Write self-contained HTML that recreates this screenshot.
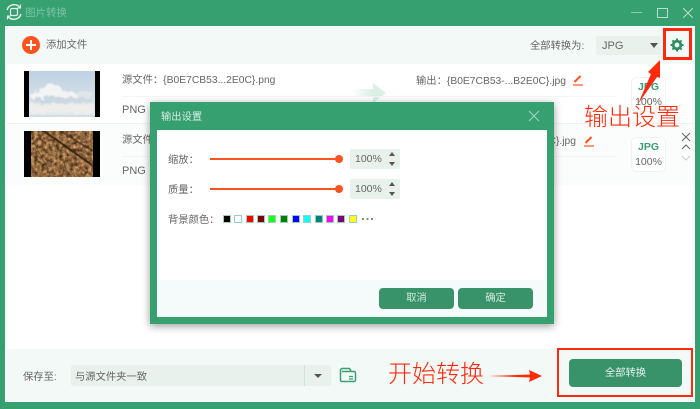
<!DOCTYPE html>
<html lang="zh"><head><meta charset="utf-8"><style>
*{box-sizing:border-box;margin:0;padding:0}
html,body{width:700px;height:409px;overflow:hidden;background:#36a071}
body{position:relative;font-family:"Liberation Sans","Noto Sans CJK SC",sans-serif;font-size:10.3px;color:#666;filter:blur(.25px)}
.a{position:absolute;white-space:nowrap;line-height:14px;margin-top:1px}
.b{position:absolute}
.red{color:#ff2a0c;font-size:24px;line-height:30px;font-weight:300;position:absolute;white-space:nowrap}
.fmt{position:absolute;width:35px;height:35px;background:#fff;border:1px solid #eef3f1;border-radius:5px;text-align:center;line-height:15px;font-size:10.5px;color:#666;padding-top:2px}
.fmt b{display:block;color:#36a071;font-size:10.5px}
.sw{position:absolute;top:215px;width:8px;height:8px;border:1px solid #9ccdb6}
.spin{position:absolute;left:350px;width:50px;height:20px;background:#e9f1ed;border-radius:2px;font-size:10.5px;line-height:21px;padding-left:5px}
.btn{position:absolute;top:288px;width:75px;height:21px;background:#39936a;border-radius:4px;color:#d4eadf;text-align:center;line-height:22px;font-size:10.3px}
</style></head><body>

<!-- title bar -->
<svg class="b" style="left:5px;top:3px" width="18" height="18" viewBox="0 0 18 18" fill="none" stroke="#e6f4ee" stroke-width="1.400"><path d="M2 7a7.500 7.500 0 0 1 13-2.500"/><path d="M16 11a7.500 7.500 0 0 1-13 2.500"/><path d="M15.500 1.500v3.500H12M2.500 16.500V13H6" stroke-width="1.100"/><rect x="5.500" y="5.500" width="7" height="7" rx="1.500" stroke-width="1.200"/></svg>
<div class="a" style="left:25px;top:5px;font-size:10.500px;color:#7cc5a3">图片转换</div>
<div class="b" style="left:631px;top:12px;width:11px;height:1px;background:#8ccbae"></div>
<div class="b" style="left:657px;top:8px;width:11px;height:10px;border:1px solid #b5dfcb"></div>
<svg class="b" style="left:683px;top:8px" width="10" height="10" stroke="#b5dfcb" stroke-width="1"><path d="M0 0l10 10M10 0L0 10"/></svg>

<!-- main window -->
<div class="b" style="left:5px;top:26px;width:690px;height:376px;background:#fff"></div>
<div class="b" style="left:6px;top:27px;width:689px;height:37px;background:#f3f9f7"></div>
<div class="b" style="left:22px;top:36px;width:18px;height:18px;border-radius:50%;background:#fb5420"></div>
<div class="b" style="left:26px;top:44px;width:10px;height:2px;background:#fff"></div>
<div class="b" style="left:30px;top:40px;width:2px;height:10px;background:#fff"></div>
<div class="a" style="left:46px;top:38px">添加文件</div>
<div class="a" style="left:530px;top:39px">全部转换为:</div>
<div class="b" style="left:596px;top:36px;width:65px;height:19px;background:#e9f1ed;border-radius:2px"></div>
<div class="a" style="left:602px;top:38px;font-size:11px">JPG</div>
<div class="b" style="left:650px;top:43px;border-left:4px solid transparent;border-right:4px solid transparent;border-top:5px solid #555"></div>
<svg class="b" style="left:670px;top:38px" width="14" height="14" viewBox="0 0 14 14"><circle cx="7" cy="7" r="3.800" fill="none" stroke="#2f8f63" stroke-width="2.800"/><g stroke="#2f8f63" stroke-width="2"><path d="M7 .5v2.500M7 11V13.500M.5 7H3M11 7h2.500M2.400 2.400l1.800 1.800M9.800 9.800l1.800 1.800M2.400 11.600l1.800-1.800M9.800 4.200l1.800-1.800"/></g></svg>

<svg width="0" height="0" style="position:absolute"><defs>
<linearGradient id="s" x1="0" y1="0" x2="0" y2="1"><stop offset="0" stop-color="#bfd0e0"/><stop offset=".55" stop-color="#d3dfe9"/><stop offset="1" stop-color="#e4e9ec"/></linearGradient>
<filter id="bl" x="-20%" y="-20%" width="140%" height="140%"><feTurbulence type="fractalNoise" baseFrequency=".18" numOctaves="2" seed="3" result="n"/><feDisplacementMap in="SourceGraphic" in2="n" scale="7"/><feGaussianBlur stdDeviation=".6"/></filter>
<filter id="st" x="0" y="0" width="100%" height="100%" color-interpolation-filters="sRGB"><feTurbulence type="fractalNoise" baseFrequency=".28" numOctaves="3" seed="4"/><feColorMatrix values="1 0 0 0 .06  .75 0 0 0 .03  .5 0 0 0 0  0 0 0 0 1"/></filter>
</defs></svg>

<!-- row 1 -->
<svg class="b" style="left:24px;top:71px" width="76" height="46" viewBox="0 0 76 46"><rect width="76" height="46" fill="#000"/><rect x="5" width="66" height="46" fill="url(#s)"/><g filter="url(#bl)"><g fill="#f1f3f4"><ellipse cx="27" cy="20" rx="11" ry="7"/><ellipse cx="16" cy="25" rx="10" ry="4"/><ellipse cx="42" cy="25" rx="12" ry="5"/><ellipse cx="60" cy="24" rx="8" ry="4" fill="#dfe6eb"/></g><ellipse cx="30" cy="29" rx="22" ry="3" fill="#cbd7e1"/><ellipse cx="56" cy="29" rx="13" ry="2.500" fill="#cdd8e1"/><rect x="5" y="33" width="66" height="9" fill="#eeefec"/></g><rect x="5" y="44" width="66" height="2" fill="#d2dde6"/><rect x="0" width="5" height="46" fill="#000"/><rect x="71" width="5" height="46" fill="#000"/></svg>
<div class="a" style="left:122px;top:73px">源文件：{B0E7CB53...2E0C}.png</div>
<div class="a" style="left:122px;top:102px;font-size:11px">PNG</div>
<div class="a" style="left:416px;top:74px">输出：{B0E7CB53-...B2E0C}.jpg</div>
<svg class="b" style="left:573px;top:74px" width="10" height="12"><path d="M1.500 8L7.500 2" stroke="#fb5420" stroke-width="2"/><path d="M0 11h10" stroke="#fb5420" stroke-width="1.200"/></svg>
<div class="b" style="left:352px;top:89px;width:21px;height:7px;background:linear-gradient(90deg,#fff,#dcefe5)"></div>
<div class="b" style="left:373px;top:83px;border-left:13px solid #dcefe5;border-top:10px solid transparent;border-bottom:10px solid transparent"></div>
<div class="b" style="left:122px;top:96px;width:494px;height:1px;background:#f3f6f5"></div>
<div class="fmt" style="left:631px;top:77px"><b>JPG</b>100%</div>

<!-- row 2 -->
<div class="b" style="left:6px;top:123px;width:689px;height:1px;background:#eef2f0"></div>
<div class="b" style="left:6px;top:124px;width:689px;height:61px;background:#fbfdfc"></div>
<div class="b" style="left:122px;top:156px;width:494px;height:1px;background:#f1f4f3"></div>
<svg class="b" style="left:24px;top:131px" width="76" height="46" viewBox="0 0 76 46"><rect width="76" height="46" fill="#000"/><rect x="7" width="62" height="46" filter="url(#st)"/><svg x="7" y="0" width="62" height="46" viewBox="7 0 62 46"><path d="M20 0L68 34" stroke="#2e1b0d" stroke-width="2" opacity=".8"/><path d="M36 0L69 20" stroke="#4a2f18" stroke-width="1.500" opacity=".7"/><path d="M12 16L24 38M42 26L38 46" stroke="#4f351e" stroke-width="1" opacity=".6"/></svg></svg>
<div class="a" style="left:122px;top:133px">源文件</div>
<div class="a" style="left:122px;top:163px;font-size:11px">PNG</div>
<div class="a" style="right:124px;top:134px">0C}.jpg</div>
<svg class="b" style="left:584px;top:135px" width="10" height="12"><path d="M1.500 8L7.500 2" stroke="#fb5420" stroke-width="2"/><path d="M0 11h10" stroke="#fb5420" stroke-width="1.200"/></svg>
<div class="fmt" style="left:631px;top:137px"><b>JPG</b>100%</div>
<svg class="b" style="left:681px;top:132px" width="10" height="30" fill="none"><path d="M1 1l8 8M9 1L1 9" stroke="#666"/><path d="M1 17l4-4 4 4" stroke="#666"/><path d="M1 24l4 4 4-4" stroke="#ccc"/></svg>

<!-- footer -->
<div class="b" style="left:6px;top:349px;width:689px;height:52px;background:#f3f9f7"></div>
<div class="a" style="left:23px;top:370px">保存至:</div>
<div class="b" style="left:71px;top:365px;width:260px;height:21px;background:#e9f1ed;border-radius:2px"></div>
<div class="b" style="left:304px;top:365px;width:1px;height:21px;background:#cfe3d9"></div>
<div class="a" style="left:75px;top:370px">与源文件夹一致</div>
<div class="b" style="left:314px;top:374px;border-left:4px solid transparent;border-right:4px solid transparent;border-top:4px solid #555"></div>
<svg class="b" style="left:339px;top:367px" width="18" height="16" fill="none" stroke="#36a071" stroke-width="1.500"><path d="M1.500 3.500V13a1.500 1.500 0 0 0 1.500 1.500h12a1.500 1.500 0 0 0 1.500-1.500V6a1.500 1.500 0 0 0-1.500-1.500H3"/><path d="M1.500 4a2 2 0 0 1 2-2.500h7L12 4"/><path d="M10 9.500h4M10 12h4" stroke-width="1.200"/></svg>
<div class="b" style="left:569px;top:359px;width:113px;height:28px;background:#39936a;border-radius:4px;color:#e3f2ea;text-align:center;line-height:29px;font-size:10.300px">全部转换</div>

<!-- dialog -->
<div class="b" style="left:150px;top:102px;width:404px;height:222px;background:#36a071;box-shadow:0 2px 8px rgba(0,0,0,.4)"></div>
<div class="b" style="left:157px;top:130px;width:390px;height:187px;background:#fff"></div>
<div class="b" style="left:157px;top:280px;width:390px;height:37px;background:#f5fbfa"></div>
<div class="a" style="left:161px;top:110px;font-size:10.300px;color:#d4eadf">输出设置</div>
<svg class="b" style="left:528px;top:110px" width="12" height="12" stroke="#a5d7c0" stroke-width="1"><path d="M1 1l10 10M11 1L1 11"/></svg>

<div class="a" style="left:168px;top:153px">缩放：</div>
<div class="b" style="left:210px;top:158px;width:129px;height:2px;background:#fb5420"></div>
<div class="b" style="left:335px;top:155px;width:8px;height:8px;border-radius:50%;background:#fb5420"></div>
<div class="spin" style="top:149px">100%</div>
<div class="b" style="left:389px;top:152px;border-left:3.500px solid transparent;border-right:3.500px solid transparent;border-bottom:4px solid #555"></div>
<div class="b" style="left:389px;top:162px;border-left:3.500px solid transparent;border-right:3.500px solid transparent;border-top:4px solid #555"></div>

<div class="a" style="left:168px;top:183px">质量：</div>
<div class="b" style="left:210px;top:188px;width:129px;height:2px;background:#fb5420"></div>
<div class="b" style="left:335px;top:185px;width:8px;height:8px;border-radius:50%;background:#fb5420"></div>
<div class="spin" style="top:179px">100%</div>
<div class="b" style="left:389px;top:182px;border-left:3.500px solid transparent;border-right:3.500px solid transparent;border-bottom:4px solid #555"></div>
<div class="b" style="left:389px;top:192px;border-left:3.500px solid transparent;border-right:3.500px solid transparent;border-top:4px solid #555"></div>

<div class="a" style="left:168px;top:213px">背景颜色：</div>
<div class="sw" style="left:223px;background:#000"></div>
<div class="sw" style="left:234px;background:#fff"></div>
<div class="sw" style="left:246px;background:#f00"></div>
<div class="sw" style="left:257px;background:#7f0000"></div>
<div class="sw" style="left:268px;background:#1aff1a"></div>
<div class="sw" style="left:280px;background:#008000"></div>
<div class="sw" style="left:292px;background:#00f"></div>
<div class="sw" style="left:303px;background:#1ff"></div>
<div class="sw" style="left:315px;background:#007f7f"></div>
<div class="sw" style="left:326px;background:#f0f"></div>
<div class="sw" style="left:337px;background:#7f007f"></div>
<div class="sw" style="left:349px;background:#ff2"></div>
<svg class="b" style="left:362px;top:218px" width="13" height="4" fill="#888"><rect x="0" y="0" width="2" height="2"/><rect x="4.500" y="0" width="2" height="2"/><rect x="9" y="0" width="2" height="2"/></svg>
<div class="btn" style="left:379px">取消</div>
<div class="btn" style="left:458px">确定</div>

<!-- annotations -->
<div class="b" style="left:663px;top:28px;width:29px;height:32px;border:3px solid #ff2a0c"></div>
<div class="b" style="left:557px;top:348px;width:136px;height:49px;border:2px solid #ff2a0c"></div>
<svg class="b" style="left:620px;top:58px" width="44" height="50"><path d="M40 2L28 14L31 16L18 46L37 19L40 20Z" fill="#ff2a0c"/></svg>
<div class="red" style="left:584px;top:103px">输出设置</div>
<div class="red" style="left:388px;top:360px">开始转换</div>
<svg class="b" style="left:488px;top:368px" width="56" height="16"><path d="M0 8L42 6.500L41 2L54 8L41 14L42 9.500Z" fill="#ff2a0c"/></svg>
</body></html>
